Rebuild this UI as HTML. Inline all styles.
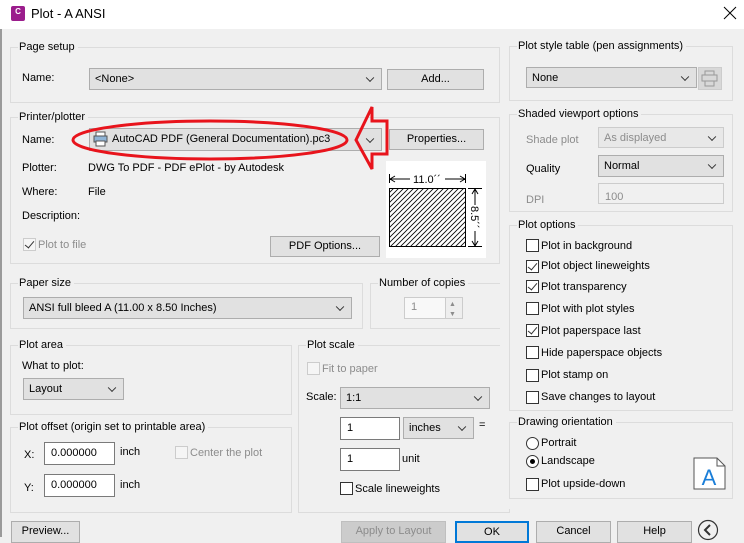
<!DOCTYPE html>
<html><head><meta charset="utf-8"><style>
*{box-sizing:border-box;margin:0;padding:0}
body{width:744px;height:537px;overflow:hidden;background:#f0f0f0;font-family:"Liberation Sans",sans-serif;font-size:11px;color:#000;position:relative}
.a{position:absolute}
.t{position:absolute;line-height:14px;white-space:nowrap}
.g{color:#8c8c8c}
.gb{position:absolute;border:1px solid #dcdcdc}
.gt{position:absolute;background:#f0f0f0;padding:0 3px 0 1px;line-height:14px;top:-8px;left:7px;white-space:nowrap}
.cb{position:absolute;background:#e1e1e1;border:1px solid #adadad;line-height:14px;padding:3px 0 0 5px;white-space:nowrap}
.cb:after{content:"";position:absolute;right:8px;top:50%;width:5px;height:5px;border-right:1px solid #333;border-bottom:1px solid #333;transform:translateY(-70%) rotate(45deg)}
.btn{position:absolute;background:#e1e1e1;border:1px solid #adadad;text-align:center;line-height:19px}
.f{position:absolute;background:#fff;border:1px solid #7a7a7a;padding:3px 0 0 6px;line-height:14px}
.ck{position:absolute;width:13px;height:13px;border:1px solid #333;background:#fff}
.ck.on:after{content:"";position:absolute;left:3px;top:0px;width:4px;height:8px;border-right:1.3px solid #333;border-bottom:1.3px solid #333;transform:rotate(40deg)}
.ck.dis{border-color:#ccc;background:#f5f5f5}
.rd{position:absolute;width:13px;height:13px;border:1px solid #333;border-radius:50%;background:#fff}
</style></head><body>
<!-- title bar -->
<div class="a" style="left:0;top:0;width:744px;height:29px;background:#fff"></div>
<div class="a" style="left:0;top:29px;width:2px;height:508px;background:#9a9a9a"></div>
<div class="a" style="left:11px;top:6px;width:14px;height:15px;background:#9b1d8c;border-radius:2px;color:#fff;font-size:8px;font-weight:bold;text-align:center;line-height:11px">C</div>
<div class="t" style="left:31px;top:7px;font-size:13px">Plot - A ANSI</div>
<svg class="a" style="left:723px;top:6px" width="14" height="14"><path d="M1 1L13 13M13 1L1 13" stroke="#000" stroke-width="1"/></svg>

<!-- Page setup -->
<div class="gb" style="left:10px;top:47px;width:490px;height:56px"><div class="gt">Page setup</div></div>
<div class="t" style="left:22px;top:71px">Name:</div>
<div class="cb" style="left:89px;top:68px;width:293px;height:22px">&lt;None&gt;</div>
<div class="btn" style="left:387px;top:69px;width:97px;height:21px">Add...</div>

<!-- Printer/plotter -->
<div class="gb" style="left:10px;top:117px;width:490px;height:147px"><div class="gt">Printer/plotter</div></div>
<div class="t" style="left:22px;top:133px">Name:</div>
<div class="cb" style="left:89px;top:128px;width:293px;height:23px;padding-left:22px">AutoCAD PDF (General Documentation).pc3</div>
<svg class="a" style="left:93px;top:131px" width="15" height="16"><rect x="3" y="1" width="9" height="5" fill="#fff" stroke="#555"/><rect x="1" y="5" width="13" height="6" fill="#8fb4d6" stroke="#555"/><rect x="3" y="10" width="9" height="5" fill="#fff" stroke="#555"/></svg>
<div class="btn" style="left:389px;top:129px;width:95px;height:21px">Properties...</div>
<div class="t" style="left:22px;top:161px">Plotter:</div>
<div class="t" style="left:88px;top:161px">DWG To PDF - PDF ePlot - by Autodesk</div>
<div class="t" style="left:22px;top:185px">Where:</div>
<div class="t" style="left:88px;top:185px">File</div>
<div class="t" style="left:22px;top:209px">Description:</div>
<div class="ck on dis" style="left:23px;top:238px"></div>
<div class="t g" style="left:38px;top:238px">Plot to file</div>
<div class="btn" style="left:270px;top:236px;width:110px;height:21px">PDF Options...</div>
<div class="a" style="left:386px;top:161px;width:100px;height:97px;background:#fff"></div>
<svg class="a" style="left:386px;top:161px" width="100" height="97">
<defs><pattern id="h" width="5" height="5" patternUnits="userSpaceOnUse"><path d="M0 5L5 0M-1 1L1 -1M4 6L6 4" stroke="#000" stroke-width="0.8"/></pattern></defs>
<rect x="3.5" y="27.5" width="76" height="58" fill="url(#h)" stroke="#000"/>
<path d="M3.5 13V22M79.5 13V22M4 18H24M59 18H79M4 18l5-3M4 18l5 3M79 18l-5-3M79 18l-5 3" stroke="#000" fill="none"/>
<text x="41" y="22" font-size="11" text-anchor="middle" font-family="Liberation Sans">11.0´´</text>
<path d="M82 27.5H96M82 85.5H96M89 28V44M89 70V85M89 28l-3 5M89 28l3 5M89 85l-3-5M89 85l3-5" stroke="#000" fill="none"/>
<text x="0" y="0" font-size="11" font-family="Liberation Sans" transform="translate(85 45) rotate(90)">8.5´´</text>
</svg>
<!-- red annotations -->
<svg class="a" style="left:0;top:100px" width="400" height="75">
<ellipse cx="210" cy="40" rx="137" ry="19" fill="none" stroke="#e8141c" stroke-width="3"/>
<path d="M356 40L372 7V21H387V54H372V69Z" fill="none" stroke="#e8141c" stroke-width="3" stroke-linejoin="miter"/>
</svg>

<!-- Paper size -->
<div class="gb" style="left:10px;top:283px;width:353px;height:46px"><div class="gt">Paper size</div></div>
<div class="cb" style="left:23px;top:297px;width:329px;height:22px">ANSI full bleed A (11.00 x 8.50 Inches)</div>
<div class="gb" style="left:370px;top:283px;width:140px;height:46px"><div class="gt">Number of copies</div></div>
<div class="a" style="left:404px;top:297px;width:59px;height:22px;background:#f8f8f8;border:1px solid #ccc"></div>
<div class="t g" style="left:411px;top:300px">1</div>
<div class="a" style="left:445px;top:298px;width:17px;height:20px;border-left:1px solid #ccc;background:#eee"></div>
<div class="t g" style="left:449px;top:298px;font-size:7px">▲</div>
<div class="t g" style="left:449px;top:308px;font-size:7px">▼</div>

<!-- Plot area -->
<div class="gb" style="left:10px;top:345px;width:282px;height:70px"><div class="gt">Plot area</div></div>
<div class="t" style="left:22px;top:359px">What to plot:</div>
<div class="cb" style="left:23px;top:378px;width:101px;height:22px">Layout</div>

<!-- Plot offset -->
<div class="gb" style="left:10px;top:427px;width:282px;height:86px"><div class="gt">Plot offset (origin set to printable area)</div></div>
<div class="t" style="left:24px;top:448px">X:</div>
<div class="f" style="left:44px;top:442px;width:71px;height:23px">0.000000</div>
<div class="t" style="left:120px;top:445px">inch</div>
<div class="ck dis" style="left:175px;top:446px"></div>
<div class="t g" style="left:190px;top:446px">Center the plot</div>
<div class="t" style="left:24px;top:481px">Y:</div>
<div class="f" style="left:44px;top:474px;width:71px;height:23px">0.000000</div>
<div class="t" style="left:120px;top:478px">inch</div>

<!-- Plot scale -->
<div class="gb" style="left:298px;top:345px;width:212px;height:168px"><div class="gt">Plot scale</div></div>
<div class="ck dis" style="left:307px;top:362px"></div>
<div class="t g" style="left:322px;top:362px">Fit to paper</div>
<div class="t" style="left:306px;top:390px">Scale:</div>
<div class="cb" style="left:340px;top:387px;width:150px;height:22px">1:1</div>
<div class="f" style="left:340px;top:417px;width:60px;height:23px">1</div>
<div class="cb" style="left:403px;top:417px;width:71px;height:22px">inches</div>
<div class="t" style="left:479px;top:418px">=</div>
<div class="f" style="left:340px;top:448px;width:60px;height:23px">1</div>
<div class="t" style="left:402px;top:452px">unit</div>
<div class="ck" style="left:340px;top:482px"></div>
<div class="t" style="left:355px;top:482px">Scale lineweights</div>

<!-- Right column -->
<div class="a" style="left:500px;top:29px;width:244px;height:480px;background:#f0f0f0"></div>
<div class="gb" style="left:509px;top:46px;width:224px;height:55px"><div class="gt">Plot style table (pen assignments)</div></div>
<div class="cb" style="left:526px;top:67px;width:171px;height:21px">None</div>
<div class="a" style="left:698px;top:67px;width:24px;height:23px;background:#d8d8d8;border:1px solid #ccc"></div>
<svg class="a" style="left:701px;top:70px" width="18" height="17"><rect x="4" y="1" width="9" height="4" fill="none" stroke="#999"/><rect x="1" y="5" width="15" height="6" fill="none" stroke="#999"/><rect x="4" y="11" width="9" height="5" fill="none" stroke="#999"/></svg>

<div class="gb" style="left:509px;top:114px;width:224px;height:98px"><div class="gt">Shaded viewport options</div></div>
<div class="t g" style="left:526px;top:133px">Shade plot</div>
<div class="cb" style="left:598px;top:127px;width:126px;height:21px;color:#8c8c8c;background:#e8e8e8;border-color:#ccc">As displayed</div>
<div class="t" style="left:526px;top:162px">Quality</div>
<div class="cb" style="left:598px;top:155px;width:126px;height:22px">Normal</div>
<div class="t g" style="left:526px;top:193px">DPI</div>
<div class="a" style="left:598px;top:183px;width:126px;height:21px;border:1px solid #ccc;background:#f0f0f0"></div>
<div class="t g" style="left:605px;top:190px">100</div>

<div class="gb" style="left:509px;top:225px;width:224px;height:186px"><div class="gt">Plot options</div></div>
<div class="ck" style="left:526px;top:239px"></div><div class="t" style="left:541px;top:239px">Plot in background</div>
<div class="ck on" style="left:526px;top:260px"></div><div class="t" style="left:541px;top:259px">Plot object lineweights</div>
<div class="ck on" style="left:526px;top:280px"></div><div class="t" style="left:541px;top:280px">Plot transparency</div>
<div class="ck" style="left:526px;top:302px"></div><div class="t" style="left:541px;top:302px">Plot with plot styles</div>
<div class="ck on" style="left:526px;top:324px"></div><div class="t" style="left:541px;top:324px">Plot paperspace last</div>
<div class="ck" style="left:526px;top:346px"></div><div class="t" style="left:541px;top:346px">Hide paperspace objects</div>
<div class="ck" style="left:526px;top:369px"></div><div class="t" style="left:541px;top:368px">Plot stamp on</div>
<div class="ck" style="left:526px;top:391px"></div><div class="t" style="left:541px;top:390px">Save changes to layout</div>

<div class="gb" style="left:509px;top:422px;width:224px;height:77px"><div class="gt">Drawing orientation</div></div>
<div class="rd" style="left:526px;top:437px"></div><div class="t" style="left:541px;top:436px">Portrait</div>
<div class="rd" style="left:526px;top:455px"></div><div class="a" style="left:530px;top:459px;width:5px;height:5px;border-radius:50%;background:#000"></div><div class="t" style="left:541px;top:454px">Landscape</div>
<div class="ck" style="left:526px;top:478px"></div><div class="t" style="left:541px;top:477px">Plot upside-down</div>
<svg class="a" style="left:693px;top:457px" width="34" height="34"><path d="M1 1H24L32 9V32H1Z" fill="#fff" stroke="#555"/><path d="M24 1V9H32" fill="none" stroke="#555"/><text x="16" y="28" font-size="22" text-anchor="middle" fill="#1a7ed8" font-family="Liberation Sans">A</text></svg>

<!-- bottom buttons -->
<div class="btn" style="left:11px;top:521px;width:69px;height:22px">Preview...</div>
<div class="btn" style="left:341px;top:521px;width:105px;height:22px;color:#8c8c8c;background:#ccc;border-color:#bfbfbf">Apply to Layout</div>
<div class="btn" style="left:455px;top:521px;width:74px;height:22px;border:2px solid #0078d7;line-height:18px">OK</div>
<div class="btn" style="left:536px;top:521px;width:75px;height:22px">Cancel</div>
<div class="btn" style="left:617px;top:521px;width:75px;height:22px">Help</div>
<svg class="a" style="left:697px;top:519px" width="22" height="22"><circle cx="11" cy="11" r="9.5" fill="none" stroke="#333" stroke-width="1.2"/><path d="M13 6L8 11L13 16" fill="none" stroke="#333" stroke-width="2"/></svg>
</body></html>
